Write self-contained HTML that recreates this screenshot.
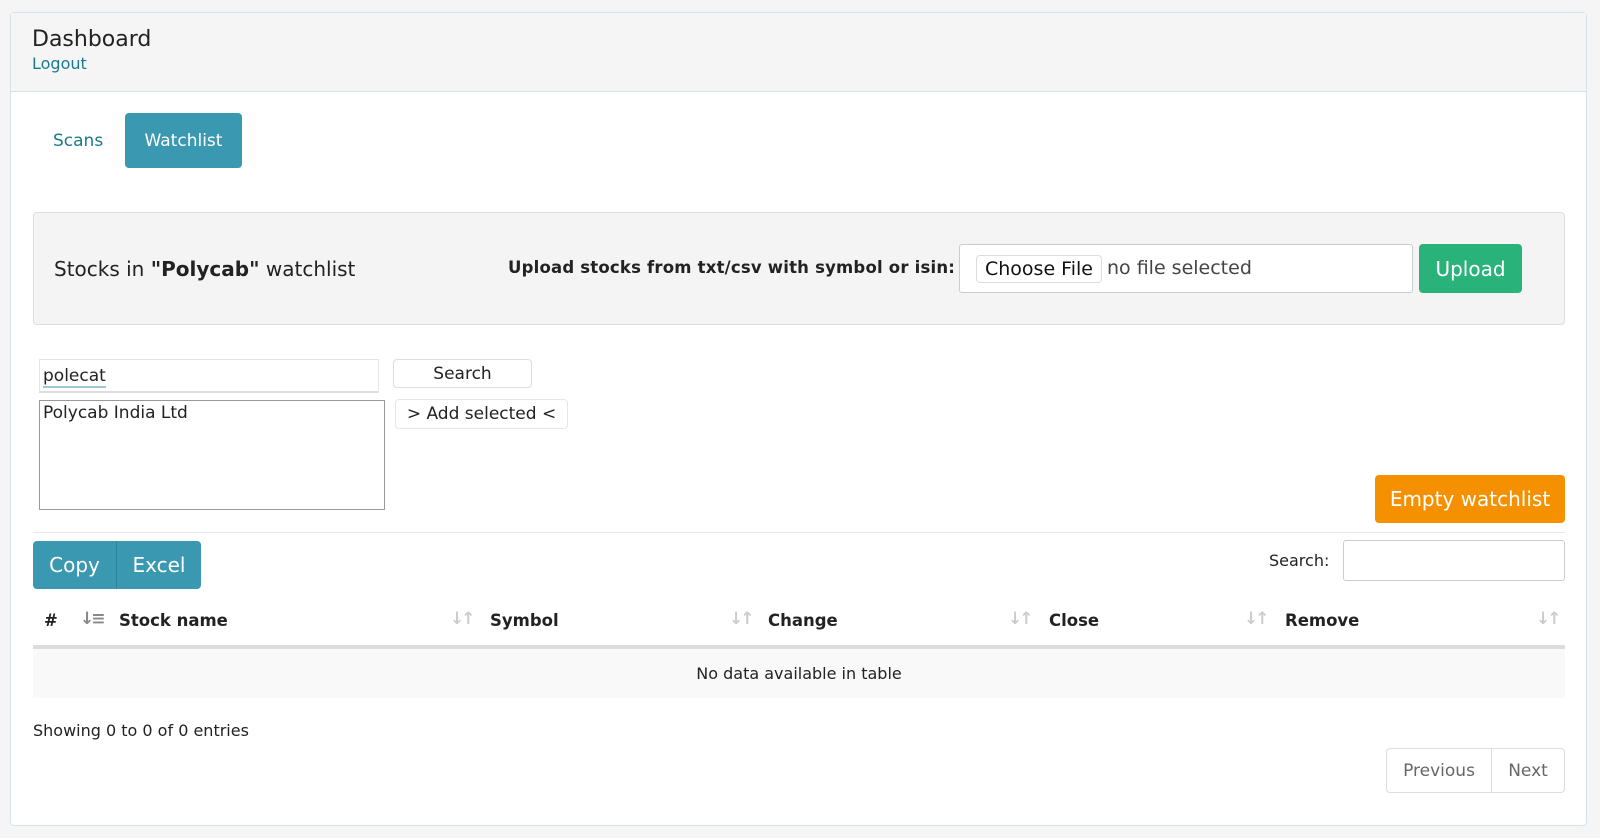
<!DOCTYPE html>
<html><head><meta charset="utf-8"><style>
*{box-sizing:border-box;margin:0;padding:0}
body{width:1600px;height:838px;background:#f5f5f5;font-family:"DejaVu Sans","Liberation Sans",sans-serif;color:#222;position:relative;overflow:hidden}
.a{position:absolute}
.card{left:10px;top:12px;width:1577px;height:814px;background:#fff;border:1px solid #d6e2e8;border-radius:4px}
.hdr{left:11px;top:13px;width:1575px;height:79px;background:#f5f5f5;border-bottom:1px solid #d6e2e8}
.btn{display:flex;align-items:center;justify-content:center;border-radius:4px}
.sort{color:#ccc;font-size:17px;font-weight:bold;letter-spacing:-3px}
</style></head><body>
<div class="a card"></div>
<div class="a hdr"></div>
<div class="a" style="left:32px;top:27px;font-size:22px;color:#222">Dashboard</div>
<div class="a" style="left:32px;top:54px;font-size:16px;color:#1a7a8c">Logout</div>
<div class="a" style="left:53px;top:131px;font-size:17px;color:#1a7a8c">Scans</div>
<div class="a btn" style="left:125px;top:113px;width:117px;height:55px;background:#3a99b0;color:#fff;font-size:17px">Watchlist</div>

<div class="a" style="left:33px;top:212px;width:1532px;height:113px;background:#f4f4f4;border:1px solid #ddd;border-radius:4px"></div>
<div class="a" style="left:54px;top:257px;font-size:20px">Stocks in <b>"Polycab"</b> watchlist</div>
<div class="a" style="left:508px;top:258px;font-size:16.5px;font-weight:bold;letter-spacing:0.2px">Upload stocks from txt/csv with symbol or isin:</div>
<div class="a" style="left:959px;top:244px;width:454px;height:49px;background:#fff;border:1px solid #ccc;border-radius:3px"></div>
<div class="a btn" style="left:976px;top:255px;width:126px;height:28px;background:#fff;border:1px solid #ddd;font-size:19px;color:#111">Choose File</div>
<div class="a" style="left:1107px;top:257px;font-size:19px;color:#444">no file selected</div>
<div class="a btn" style="left:1419px;top:244px;width:103px;height:49px;background:#2ab27b;color:#fff;font-size:20px">Upload</div>

<div class="a" style="left:39px;top:359px;width:340px;height:34px;border:1px solid #e4e4e4;border-bottom:2px solid #ddd;font-size:17px;padding:6px 3px"><span style="border-bottom:2px solid #9cc9d8">polecat</span></div>
<div class="a btn" style="left:393px;top:359px;width:139px;height:29px;border:1px solid #ddd;font-size:17px;color:#222">Search</div>
<div class="a" style="left:39px;top:400px;width:346px;height:110px;border:1px solid #999;font-size:17px;padding:2px 3px">Polycab India Ltd</div>
<div class="a btn" style="left:395px;top:399px;width:173px;height:30px;border:1px solid #e6e6e6;font-size:17px">&gt; Add selected &lt;</div>
<div class="a btn" style="left:1375px;top:475px;width:190px;height:48px;background:#f59100;color:#fff;font-size:20px">Empty watchlist</div>
<div class="a" style="left:33px;top:532px;width:1532px;height:1px;background:#e8e8e8"></div>

<div class="a" style="left:33px;top:541px;width:168px;height:48px;background:#3a99b0;border-radius:4px;display:flex;color:#fff;font-size:20px">
<div style="width:84px;display:flex;align-items:center;justify-content:center;border-right:1px solid #2f8598">Copy</div>
<div style="flex:1;display:flex;align-items:center;justify-content:center">Excel</div></div>
<div class="a" style="left:1269px;top:551px;font-size:16px">Search:</div>
<div class="a" style="left:1343px;top:540px;width:222px;height:41px;border:1px solid #ccc;border-radius:3px"></div>

<div class="a" style="top:611px;left:0;width:1600px;font-size:16.5px;font-weight:bold">
<span class="a" style="left:44px">#</span>
<span class="a sort" style="left:80px;color:#888;top:-2px">↓≡</span>
<span class="a" style="left:119px">Stock name</span>
<span class="a sort" style="left:450px;top:-2px">↓↑</span>
<span class="a" style="left:490px">Symbol</span>
<span class="a sort" style="left:729px;top:-2px">↓↑</span>
<span class="a" style="left:768px">Change</span>
<span class="a sort" style="left:1008px;top:-2px">↓↑</span>
<span class="a" style="left:1049px">Close</span>
<span class="a sort" style="left:1244px;top:-2px">↓↑</span>
<span class="a" style="left:1285px">Remove</span>
<span class="a sort" style="left:1536px;top:-2px">↓↑</span>
</div>
<div class="a" style="left:33px;top:645px;width:1532px;height:4px;background:#ddd"></div>
<div class="a" style="left:33px;top:649px;width:1532px;height:49px;background:#f9f9f9;display:flex;align-items:center;justify-content:center;font-size:16px">No data available in table</div>
<div class="a" style="left:33px;top:721px;font-size:16px">Showing 0 to 0 of 0 entries</div>
<div class="a" style="left:1386px;top:748px;width:179px;height:45px;border:1px solid #ddd;border-radius:4px;display:flex;color:#666;font-size:17px">
<div style="width:105px;display:flex;align-items:center;justify-content:center;border-right:1px solid #ddd">Previous</div>
<div style="flex:1;display:flex;align-items:center;justify-content:center">Next</div></div>
</body></html>
